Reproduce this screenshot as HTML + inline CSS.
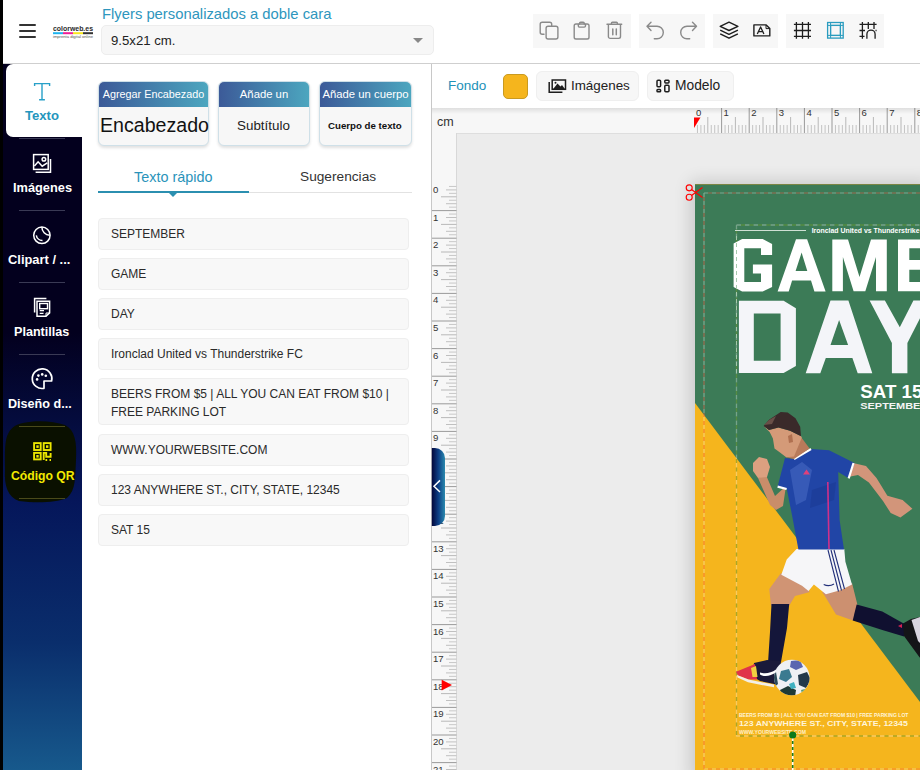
<!DOCTYPE html>
<html><head><meta charset="utf-8">
<style>
*{margin:0;padding:0;box-sizing:border-box}
html,body{width:920px;height:770px;overflow:hidden;background:#fff;font-family:"Liberation Sans",sans-serif}
.a{position:absolute}
#blk{left:0;top:0;width:3px;height:770px;background:#000}
#hdr{left:3px;top:0;width:917px;height:64px;background:#fff;border-bottom:1px solid #cfcfcf}
.ham{left:19px;width:17px;height:2px;background:#333;border-radius:1px}
#title{left:102px;top:6px;font-size:14.8px;color:#2e96bd;white-space:nowrap}
#dd{left:101px;top:25px;width:333px;height:30px;background:#f7f7f7;border:1px solid #ededed;border-radius:5px}
#ddt{left:111px;top:33px;font-size:13.2px;color:#222}
.tb{top:14px;height:34px;background:#f7f7f7}
#side{left:3px;top:64px;width:79px;height:706px;background:linear-gradient(180deg,#03001e 0%,#03001e 38%,#05165a 62%,#0a2e6c 82%,#17598c 100%)}
#tcard{left:6px;top:64px;width:80px;height:73px;background:#fff;border-radius:7px 0 0 7px}
.sl{color:#fff;font-weight:bold;font-size:12.6px;white-space:nowrap;text-align:center;width:79px;left:3px}
.sep{left:19px;width:46px;height:1px;background:#3a3a55}
#panel{left:82px;top:64px;width:349px;height:706px;background:#fff}
#vdiv{left:431px;top:64px;width:1px;height:706px;background:#c8c8c8}
.card{width:92px;height:65px;border:1px solid #cfe0e8;border-radius:6px;background:#f7f7f7;overflow:hidden;box-shadow:0 2px 3px rgba(0,0,0,.12)}
.ch{height:25px;background:linear-gradient(90deg,#3c5a98,#4ca6bf);color:#fff;font-size:11.3px;text-align:center;line-height:25px;white-space:nowrap}
.item{left:98px;width:311px;height:32px;background:#f8f8f8;border:1px solid #eeeeee;border-radius:4px;font-size:12px;color:#2a2a2a;padding:0 0 0 12px;line-height:30px;white-space:nowrap}
</style></head><body>
<div class="a" id="hdr"></div>
<div class="a" id="blk"></div>
<div class="a ham" style="top:24px"></div>
<div class="a ham" style="top:30px"></div>
<div class="a ham" style="top:36px"></div>

<svg class="a" style="left:50px;top:22px" width="48" height="20" viewBox="50 22 48 20">
<text x="53" y="31.3" font-size="6.3" font-weight="bold" fill="#2a2a2a" font-family="Liberation Sans" textLength="40" lengthAdjust="spacingAndGlyphs">colorweb.es</text>
<rect x="53" y="32.2" width="10" height="2" fill="#1eb4ee"/>
<rect x="63" y="32.2" width="10" height="2" fill="#ee1e96"/>
<rect x="73" y="32.2" width="10" height="2" fill="#f8e81e"/>
<rect x="83" y="32.2" width="10" height="2" fill="#333"/>
<text x="53" y="37.6" font-size="3" fill="#555" font-family="Liberation Sans" textLength="40" lengthAdjust="spacingAndGlyphs">imprenta digital online</text>
</svg>
<div class="a" id="title">Flyers personalizados a doble cara</div>
<div class="a" id="dd"></div>
<div class="a" id="ddt">9.5x21 cm.</div>
<svg class="a" style="left:413px;top:38px" width="11" height="6"><path d="M0 0H10L5 5Z" fill="#888"/></svg>

<div class="a tb" style="left:533px;width:98px"></div>
<div class="a tb" style="left:639px;width:66px"></div>
<div class="a tb" style="left:713px;width:65px"></div>
<div class="a tb" style="left:786px;width:98px"></div>


<svg class="a" style="left:520px;top:10px" width="380" height="40" viewBox="520 10 380 40">
<g fill="none" stroke="#8a8a8a" stroke-width="1.4" stroke-linecap="round" stroke-linejoin="round">
<path d="M544 34.3H542.2A2 2 0 0 1 540.2 32.3V24.2A2 2 0 0 1 542.2 22.2H549.7A2 2 0 0 1 551.7 24.2V25.5"/>
<rect x="546.1" y="26.3" width="11.8" height="12.7" rx="2"/>
<rect x="574.2" y="24" width="14.8" height="15" rx="1.8"/>
<path d="M578.3 24.5V25.8A1.3 1.3 0 0 0 579.6 27.1H584.2A1.3 1.3 0 0 0 585.5 25.8V24.5"/>
<path d="M579.5 24V23.4A1.2 1.2 0 0 1 580.7 22.2H583.1A1.2 1.2 0 0 1 584.3 23.4V24"/>
<path d="M607 24.3H621.7M611.4 24.3V23.3A1 1 0 0 1 612.4 22.3H616.4A1 1 0 0 1 617.4 23.3V24.3"/>
<path d="M608.4 24.8V36.6A1.8 1.8 0 0 0 610.2 38.4H618.7A1.8 1.8 0 0 0 620.5 36.6V24.8"/>
<path d="M612.8 28.9V34.8M616.3 28.9V34.8" stroke-width="1.5"/>
<path d="M651 22.3L647 26.2L651 30.5M647.3 26.2H657A6.3 6.3 0 0 1 657 38.8H654.3"/>
<path d="M692.5 22.3L696.5 26.2L692.5 30.5M696.2 26.2H687A6.3 6.3 0 0 0 687 38.8H689.7"/>
</g>
<g fill="none" stroke="#1e1e1e" stroke-width="1.4" stroke-linejoin="round">
<path d="M729 22.2L737.9 26.4L729 30.5L720.2 26.4Z"/>
<path d="M720.2 30.1L729 34.3L737.9 30.1"/>
<path d="M720.2 33.8L729 38.2L737.9 33.8"/>
<path d="M753.9 24.9H766.2L769.8 28.5V35.9H753.9Z"/>
<path d="M766 25V28.6H769.6" stroke-width="1"/>
<path d="M757.3 34L760.6 26.9L763.9 34M758.5 31.6H762.7" stroke-width="1.3"/>
</g>
<g fill="none" stroke="#1e1e1e" stroke-width="1.3">
<path d="M796.4 21.9V38.7M802.5 21.9V38.7M808.4 21.9V38.7M793.9 24.4H811M793.9 30.5H811M793.9 36.4H811"/>
<path d="M862.4 21.9V38.7M868.3 21.9V29M874 21.9V29M859.5 24.4H876.6M859.5 30.5H865M859.5 36.4H864.5M866.9 38.7V34.2A4.1 4.1 0 0 1 875.1 34.2V38.7M875.5 30.5H876.6"/>
</g>
<g fill="none" stroke="#2a9cbf" stroke-width="1.3">
<rect x="827.6" y="22.5" width="15.6" height="15.6"/>
<rect x="830.6" y="25.4" width="9.8" height="10"/>
<path d="M830.6 22.5V38.1M840.4 22.5V38.1M827.6 25.4H843.2M827.6 35.4H843.2" stroke-width="1"/>
</g>
</svg>
<div class="a" id="side"></div>
<div class="a" id="panel"></div>
<div class="a" id="tcard"></div>
<div class="a" style="left:432px;top:64px;width:488px;height:706px;background:#ececec"></div>
<svg class="a" style="left:432px;top:64px" width="488" height="706" viewBox="432 64 488 706">
<defs><filter id="sh" x="-30%" y="-30%" width="160%" height="160%"><feGaussianBlur stdDeviation="9"/></filter><linearGradient id="tbs" x1="0" y1="0" x2="0" y2="1"><stop offset="0" stop-color="#000" stop-opacity=".10"/><stop offset="1" stop-color="#000" stop-opacity="0"/></linearGradient></defs>
<rect x="691" y="182" width="240" height="600" fill="#000" opacity=".16" filter="url(#sh)"/>
<rect x="432" y="108" width="488" height="25.5" fill="#f7f7f7"/>
<rect x="432" y="133" width="488" height="1" fill="#dedede"/>
<rect x="432" y="133" width="24.5" height="637" fill="#f7f7f7"/>
<rect x="456" y="133" width="1" height="637" fill="#d8d8d8"/>
<rect x="696.95" y="125" width="1" height="8" fill="#c4c4c4"/>
<rect x="700.40" y="125" width="1" height="8" fill="#c4c4c4"/>
<rect x="703.85" y="125" width="1" height="8" fill="#c4c4c4"/>
<rect x="707.30" y="117" width="1" height="16" fill="#b8b8b8"/>
<rect x="710.75" y="125" width="1" height="8" fill="#c4c4c4"/>
<rect x="714.20" y="125" width="1" height="8" fill="#c4c4c4"/>
<rect x="717.65" y="125" width="1" height="8" fill="#c4c4c4"/>
<rect x="721.10" y="108" width="1" height="25" fill="#9a9a9a"/>
<rect x="724.55" y="125" width="1" height="8" fill="#c4c4c4"/>
<rect x="728.00" y="125" width="1" height="8" fill="#c4c4c4"/>
<rect x="731.45" y="125" width="1" height="8" fill="#c4c4c4"/>
<rect x="734.90" y="117" width="1" height="16" fill="#b8b8b8"/>
<rect x="738.35" y="125" width="1" height="8" fill="#c4c4c4"/>
<rect x="741.80" y="125" width="1" height="8" fill="#c4c4c4"/>
<rect x="745.25" y="125" width="1" height="8" fill="#c4c4c4"/>
<rect x="748.70" y="108" width="1" height="25" fill="#9a9a9a"/>
<rect x="752.15" y="125" width="1" height="8" fill="#c4c4c4"/>
<rect x="755.60" y="125" width="1" height="8" fill="#c4c4c4"/>
<rect x="759.05" y="125" width="1" height="8" fill="#c4c4c4"/>
<rect x="762.50" y="117" width="1" height="16" fill="#b8b8b8"/>
<rect x="765.95" y="125" width="1" height="8" fill="#c4c4c4"/>
<rect x="769.40" y="125" width="1" height="8" fill="#c4c4c4"/>
<rect x="772.85" y="125" width="1" height="8" fill="#c4c4c4"/>
<rect x="776.30" y="108" width="1" height="25" fill="#9a9a9a"/>
<rect x="779.75" y="125" width="1" height="8" fill="#c4c4c4"/>
<rect x="783.20" y="125" width="1" height="8" fill="#c4c4c4"/>
<rect x="786.65" y="125" width="1" height="8" fill="#c4c4c4"/>
<rect x="790.10" y="117" width="1" height="16" fill="#b8b8b8"/>
<rect x="793.55" y="125" width="1" height="8" fill="#c4c4c4"/>
<rect x="797.00" y="125" width="1" height="8" fill="#c4c4c4"/>
<rect x="800.45" y="125" width="1" height="8" fill="#c4c4c4"/>
<rect x="803.90" y="108" width="1" height="25" fill="#9a9a9a"/>
<rect x="807.35" y="125" width="1" height="8" fill="#c4c4c4"/>
<rect x="810.80" y="125" width="1" height="8" fill="#c4c4c4"/>
<rect x="814.25" y="125" width="1" height="8" fill="#c4c4c4"/>
<rect x="817.70" y="117" width="1" height="16" fill="#b8b8b8"/>
<rect x="821.15" y="125" width="1" height="8" fill="#c4c4c4"/>
<rect x="824.60" y="125" width="1" height="8" fill="#c4c4c4"/>
<rect x="828.05" y="125" width="1" height="8" fill="#c4c4c4"/>
<rect x="831.50" y="108" width="1" height="25" fill="#9a9a9a"/>
<rect x="834.95" y="125" width="1" height="8" fill="#c4c4c4"/>
<rect x="838.40" y="125" width="1" height="8" fill="#c4c4c4"/>
<rect x="841.85" y="125" width="1" height="8" fill="#c4c4c4"/>
<rect x="845.30" y="117" width="1" height="16" fill="#b8b8b8"/>
<rect x="848.75" y="125" width="1" height="8" fill="#c4c4c4"/>
<rect x="852.20" y="125" width="1" height="8" fill="#c4c4c4"/>
<rect x="855.65" y="125" width="1" height="8" fill="#c4c4c4"/>
<rect x="859.10" y="108" width="1" height="25" fill="#9a9a9a"/>
<rect x="862.55" y="125" width="1" height="8" fill="#c4c4c4"/>
<rect x="866.00" y="125" width="1" height="8" fill="#c4c4c4"/>
<rect x="869.45" y="125" width="1" height="8" fill="#c4c4c4"/>
<rect x="872.90" y="117" width="1" height="16" fill="#b8b8b8"/>
<rect x="876.35" y="125" width="1" height="8" fill="#c4c4c4"/>
<rect x="879.80" y="125" width="1" height="8" fill="#c4c4c4"/>
<rect x="883.25" y="125" width="1" height="8" fill="#c4c4c4"/>
<rect x="886.70" y="108" width="1" height="25" fill="#9a9a9a"/>
<rect x="890.15" y="125" width="1" height="8" fill="#c4c4c4"/>
<rect x="893.60" y="125" width="1" height="8" fill="#c4c4c4"/>
<rect x="897.05" y="125" width="1" height="8" fill="#c4c4c4"/>
<rect x="900.50" y="117" width="1" height="16" fill="#b8b8b8"/>
<rect x="903.95" y="125" width="1" height="8" fill="#c4c4c4"/>
<rect x="907.40" y="125" width="1" height="8" fill="#c4c4c4"/>
<rect x="910.85" y="125" width="1" height="8" fill="#c4c4c4"/>
<rect x="914.30" y="108" width="1" height="25" fill="#9a9a9a"/>
<rect x="917.75" y="125" width="1" height="8" fill="#c4c4c4"/>
<text x="696.0" y="116" font-size="9.5" fill="#333" font-family="Liberation Sans">0</text>
<text x="723.6" y="116" font-size="9.5" fill="#333" font-family="Liberation Sans">1</text>
<text x="751.2" y="116" font-size="9.5" fill="#333" font-family="Liberation Sans">2</text>
<text x="778.8" y="116" font-size="9.5" fill="#333" font-family="Liberation Sans">3</text>
<text x="806.4" y="116" font-size="9.5" fill="#333" font-family="Liberation Sans">4</text>
<text x="834.0" y="116" font-size="9.5" fill="#333" font-family="Liberation Sans">5</text>
<text x="861.6" y="116" font-size="9.5" fill="#333" font-family="Liberation Sans">6</text>
<text x="889.2" y="116" font-size="9.5" fill="#333" font-family="Liberation Sans">7</text>
<text x="916.8" y="116" font-size="9.5" fill="#333" font-family="Liberation Sans">8</text>
<rect x="449" y="185.95" width="7.5" height="1" fill="#c8c8c8"/>
<rect x="446" y="189.40" width="10.5" height="1" fill="#c0c0c0"/>
<rect x="449" y="192.85" width="7.5" height="1" fill="#c8c8c8"/>
<rect x="441" y="196.30" width="15.5" height="1" fill="#b8b8b8"/>
<rect x="449" y="199.75" width="7.5" height="1" fill="#c8c8c8"/>
<rect x="446" y="203.20" width="10.5" height="1" fill="#c0c0c0"/>
<rect x="449" y="206.65" width="7.5" height="1" fill="#c8c8c8"/>
<rect x="432" y="210.10" width="24.5" height="1" fill="#9a9a9a"/>
<rect x="449" y="213.55" width="7.5" height="1" fill="#c8c8c8"/>
<rect x="446" y="217.00" width="10.5" height="1" fill="#c0c0c0"/>
<rect x="449" y="220.45" width="7.5" height="1" fill="#c8c8c8"/>
<rect x="441" y="223.90" width="15.5" height="1" fill="#b8b8b8"/>
<rect x="449" y="227.35" width="7.5" height="1" fill="#c8c8c8"/>
<rect x="446" y="230.80" width="10.5" height="1" fill="#c0c0c0"/>
<rect x="449" y="234.25" width="7.5" height="1" fill="#c8c8c8"/>
<rect x="432" y="237.70" width="24.5" height="1" fill="#9a9a9a"/>
<rect x="449" y="241.15" width="7.5" height="1" fill="#c8c8c8"/>
<rect x="446" y="244.60" width="10.5" height="1" fill="#c0c0c0"/>
<rect x="449" y="248.05" width="7.5" height="1" fill="#c8c8c8"/>
<rect x="441" y="251.50" width="15.5" height="1" fill="#b8b8b8"/>
<rect x="449" y="254.95" width="7.5" height="1" fill="#c8c8c8"/>
<rect x="446" y="258.40" width="10.5" height="1" fill="#c0c0c0"/>
<rect x="449" y="261.85" width="7.5" height="1" fill="#c8c8c8"/>
<rect x="432" y="265.30" width="24.5" height="1" fill="#9a9a9a"/>
<rect x="449" y="268.75" width="7.5" height="1" fill="#c8c8c8"/>
<rect x="446" y="272.20" width="10.5" height="1" fill="#c0c0c0"/>
<rect x="449" y="275.65" width="7.5" height="1" fill="#c8c8c8"/>
<rect x="441" y="279.10" width="15.5" height="1" fill="#b8b8b8"/>
<rect x="449" y="282.55" width="7.5" height="1" fill="#c8c8c8"/>
<rect x="446" y="286.00" width="10.5" height="1" fill="#c0c0c0"/>
<rect x="449" y="289.45" width="7.5" height="1" fill="#c8c8c8"/>
<rect x="432" y="292.90" width="24.5" height="1" fill="#9a9a9a"/>
<rect x="449" y="296.35" width="7.5" height="1" fill="#c8c8c8"/>
<rect x="446" y="299.80" width="10.5" height="1" fill="#c0c0c0"/>
<rect x="449" y="303.25" width="7.5" height="1" fill="#c8c8c8"/>
<rect x="441" y="306.70" width="15.5" height="1" fill="#b8b8b8"/>
<rect x="449" y="310.15" width="7.5" height="1" fill="#c8c8c8"/>
<rect x="446" y="313.60" width="10.5" height="1" fill="#c0c0c0"/>
<rect x="449" y="317.05" width="7.5" height="1" fill="#c8c8c8"/>
<rect x="432" y="320.50" width="24.5" height="1" fill="#9a9a9a"/>
<rect x="449" y="323.95" width="7.5" height="1" fill="#c8c8c8"/>
<rect x="446" y="327.40" width="10.5" height="1" fill="#c0c0c0"/>
<rect x="449" y="330.85" width="7.5" height="1" fill="#c8c8c8"/>
<rect x="441" y="334.30" width="15.5" height="1" fill="#b8b8b8"/>
<rect x="449" y="337.75" width="7.5" height="1" fill="#c8c8c8"/>
<rect x="446" y="341.20" width="10.5" height="1" fill="#c0c0c0"/>
<rect x="449" y="344.65" width="7.5" height="1" fill="#c8c8c8"/>
<rect x="432" y="348.10" width="24.5" height="1" fill="#9a9a9a"/>
<rect x="449" y="351.55" width="7.5" height="1" fill="#c8c8c8"/>
<rect x="446" y="355.00" width="10.5" height="1" fill="#c0c0c0"/>
<rect x="449" y="358.45" width="7.5" height="1" fill="#c8c8c8"/>
<rect x="441" y="361.90" width="15.5" height="1" fill="#b8b8b8"/>
<rect x="449" y="365.35" width="7.5" height="1" fill="#c8c8c8"/>
<rect x="446" y="368.80" width="10.5" height="1" fill="#c0c0c0"/>
<rect x="449" y="372.25" width="7.5" height="1" fill="#c8c8c8"/>
<rect x="432" y="375.70" width="24.5" height="1" fill="#9a9a9a"/>
<rect x="449" y="379.15" width="7.5" height="1" fill="#c8c8c8"/>
<rect x="446" y="382.60" width="10.5" height="1" fill="#c0c0c0"/>
<rect x="449" y="386.05" width="7.5" height="1" fill="#c8c8c8"/>
<rect x="441" y="389.50" width="15.5" height="1" fill="#b8b8b8"/>
<rect x="449" y="392.95" width="7.5" height="1" fill="#c8c8c8"/>
<rect x="446" y="396.40" width="10.5" height="1" fill="#c0c0c0"/>
<rect x="449" y="399.85" width="7.5" height="1" fill="#c8c8c8"/>
<rect x="432" y="403.30" width="24.5" height="1" fill="#9a9a9a"/>
<rect x="449" y="406.75" width="7.5" height="1" fill="#c8c8c8"/>
<rect x="446" y="410.20" width="10.5" height="1" fill="#c0c0c0"/>
<rect x="449" y="413.65" width="7.5" height="1" fill="#c8c8c8"/>
<rect x="441" y="417.10" width="15.5" height="1" fill="#b8b8b8"/>
<rect x="449" y="420.55" width="7.5" height="1" fill="#c8c8c8"/>
<rect x="446" y="424.00" width="10.5" height="1" fill="#c0c0c0"/>
<rect x="449" y="427.45" width="7.5" height="1" fill="#c8c8c8"/>
<rect x="432" y="430.90" width="24.5" height="1" fill="#9a9a9a"/>
<rect x="449" y="434.35" width="7.5" height="1" fill="#c8c8c8"/>
<rect x="446" y="437.80" width="10.5" height="1" fill="#c0c0c0"/>
<rect x="449" y="441.25" width="7.5" height="1" fill="#c8c8c8"/>
<rect x="441" y="444.70" width="15.5" height="1" fill="#b8b8b8"/>
<rect x="449" y="448.15" width="7.5" height="1" fill="#c8c8c8"/>
<rect x="446" y="451.60" width="10.5" height="1" fill="#c0c0c0"/>
<rect x="449" y="455.05" width="7.5" height="1" fill="#c8c8c8"/>
<rect x="432" y="458.50" width="24.5" height="1" fill="#9a9a9a"/>
<rect x="449" y="461.95" width="7.5" height="1" fill="#c8c8c8"/>
<rect x="446" y="465.40" width="10.5" height="1" fill="#c0c0c0"/>
<rect x="449" y="468.85" width="7.5" height="1" fill="#c8c8c8"/>
<rect x="441" y="472.30" width="15.5" height="1" fill="#b8b8b8"/>
<rect x="449" y="475.75" width="7.5" height="1" fill="#c8c8c8"/>
<rect x="446" y="479.20" width="10.5" height="1" fill="#c0c0c0"/>
<rect x="449" y="482.65" width="7.5" height="1" fill="#c8c8c8"/>
<rect x="432" y="486.10" width="24.5" height="1" fill="#9a9a9a"/>
<rect x="449" y="489.55" width="7.5" height="1" fill="#c8c8c8"/>
<rect x="446" y="493.00" width="10.5" height="1" fill="#c0c0c0"/>
<rect x="449" y="496.45" width="7.5" height="1" fill="#c8c8c8"/>
<rect x="441" y="499.90" width="15.5" height="1" fill="#b8b8b8"/>
<rect x="449" y="503.35" width="7.5" height="1" fill="#c8c8c8"/>
<rect x="446" y="506.80" width="10.5" height="1" fill="#c0c0c0"/>
<rect x="449" y="510.25" width="7.5" height="1" fill="#c8c8c8"/>
<rect x="432" y="513.70" width="24.5" height="1" fill="#9a9a9a"/>
<rect x="449" y="517.15" width="7.5" height="1" fill="#c8c8c8"/>
<rect x="446" y="520.60" width="10.5" height="1" fill="#c0c0c0"/>
<rect x="449" y="524.05" width="7.5" height="1" fill="#c8c8c8"/>
<rect x="441" y="527.50" width="15.5" height="1" fill="#b8b8b8"/>
<rect x="449" y="530.95" width="7.5" height="1" fill="#c8c8c8"/>
<rect x="446" y="534.40" width="10.5" height="1" fill="#c0c0c0"/>
<rect x="449" y="537.85" width="7.5" height="1" fill="#c8c8c8"/>
<rect x="432" y="541.30" width="24.5" height="1" fill="#9a9a9a"/>
<rect x="449" y="544.75" width="7.5" height="1" fill="#c8c8c8"/>
<rect x="446" y="548.20" width="10.5" height="1" fill="#c0c0c0"/>
<rect x="449" y="551.65" width="7.5" height="1" fill="#c8c8c8"/>
<rect x="441" y="555.10" width="15.5" height="1" fill="#b8b8b8"/>
<rect x="449" y="558.55" width="7.5" height="1" fill="#c8c8c8"/>
<rect x="446" y="562.00" width="10.5" height="1" fill="#c0c0c0"/>
<rect x="449" y="565.45" width="7.5" height="1" fill="#c8c8c8"/>
<rect x="432" y="568.90" width="24.5" height="1" fill="#9a9a9a"/>
<rect x="449" y="572.35" width="7.5" height="1" fill="#c8c8c8"/>
<rect x="446" y="575.80" width="10.5" height="1" fill="#c0c0c0"/>
<rect x="449" y="579.25" width="7.5" height="1" fill="#c8c8c8"/>
<rect x="441" y="582.70" width="15.5" height="1" fill="#b8b8b8"/>
<rect x="449" y="586.15" width="7.5" height="1" fill="#c8c8c8"/>
<rect x="446" y="589.60" width="10.5" height="1" fill="#c0c0c0"/>
<rect x="449" y="593.05" width="7.5" height="1" fill="#c8c8c8"/>
<rect x="432" y="596.50" width="24.5" height="1" fill="#9a9a9a"/>
<rect x="449" y="599.95" width="7.5" height="1" fill="#c8c8c8"/>
<rect x="446" y="603.40" width="10.5" height="1" fill="#c0c0c0"/>
<rect x="449" y="606.85" width="7.5" height="1" fill="#c8c8c8"/>
<rect x="441" y="610.30" width="15.5" height="1" fill="#b8b8b8"/>
<rect x="449" y="613.75" width="7.5" height="1" fill="#c8c8c8"/>
<rect x="446" y="617.20" width="10.5" height="1" fill="#c0c0c0"/>
<rect x="449" y="620.65" width="7.5" height="1" fill="#c8c8c8"/>
<rect x="432" y="624.10" width="24.5" height="1" fill="#9a9a9a"/>
<rect x="449" y="627.55" width="7.5" height="1" fill="#c8c8c8"/>
<rect x="446" y="631.00" width="10.5" height="1" fill="#c0c0c0"/>
<rect x="449" y="634.45" width="7.5" height="1" fill="#c8c8c8"/>
<rect x="441" y="637.90" width="15.5" height="1" fill="#b8b8b8"/>
<rect x="449" y="641.35" width="7.5" height="1" fill="#c8c8c8"/>
<rect x="446" y="644.80" width="10.5" height="1" fill="#c0c0c0"/>
<rect x="449" y="648.25" width="7.5" height="1" fill="#c8c8c8"/>
<rect x="432" y="651.70" width="24.5" height="1" fill="#9a9a9a"/>
<rect x="449" y="655.15" width="7.5" height="1" fill="#c8c8c8"/>
<rect x="446" y="658.60" width="10.5" height="1" fill="#c0c0c0"/>
<rect x="449" y="662.05" width="7.5" height="1" fill="#c8c8c8"/>
<rect x="441" y="665.50" width="15.5" height="1" fill="#b8b8b8"/>
<rect x="449" y="668.95" width="7.5" height="1" fill="#c8c8c8"/>
<rect x="446" y="672.40" width="10.5" height="1" fill="#c0c0c0"/>
<rect x="449" y="675.85" width="7.5" height="1" fill="#c8c8c8"/>
<rect x="432" y="679.30" width="24.5" height="1" fill="#9a9a9a"/>
<rect x="449" y="682.75" width="7.5" height="1" fill="#c8c8c8"/>
<rect x="446" y="686.20" width="10.5" height="1" fill="#c0c0c0"/>
<rect x="449" y="689.65" width="7.5" height="1" fill="#c8c8c8"/>
<rect x="441" y="693.10" width="15.5" height="1" fill="#b8b8b8"/>
<rect x="449" y="696.55" width="7.5" height="1" fill="#c8c8c8"/>
<rect x="446" y="700.00" width="10.5" height="1" fill="#c0c0c0"/>
<rect x="449" y="703.45" width="7.5" height="1" fill="#c8c8c8"/>
<rect x="432" y="706.90" width="24.5" height="1" fill="#9a9a9a"/>
<rect x="449" y="710.35" width="7.5" height="1" fill="#c8c8c8"/>
<rect x="446" y="713.80" width="10.5" height="1" fill="#c0c0c0"/>
<rect x="449" y="717.25" width="7.5" height="1" fill="#c8c8c8"/>
<rect x="441" y="720.70" width="15.5" height="1" fill="#b8b8b8"/>
<rect x="449" y="724.15" width="7.5" height="1" fill="#c8c8c8"/>
<rect x="446" y="727.60" width="10.5" height="1" fill="#c0c0c0"/>
<rect x="449" y="731.05" width="7.5" height="1" fill="#c8c8c8"/>
<rect x="432" y="734.50" width="24.5" height="1" fill="#9a9a9a"/>
<rect x="449" y="737.95" width="7.5" height="1" fill="#c8c8c8"/>
<rect x="446" y="741.40" width="10.5" height="1" fill="#c0c0c0"/>
<rect x="449" y="744.85" width="7.5" height="1" fill="#c8c8c8"/>
<rect x="441" y="748.30" width="15.5" height="1" fill="#b8b8b8"/>
<rect x="449" y="751.75" width="7.5" height="1" fill="#c8c8c8"/>
<rect x="446" y="755.20" width="10.5" height="1" fill="#c0c0c0"/>
<rect x="449" y="758.65" width="7.5" height="1" fill="#c8c8c8"/>
<rect x="432" y="762.10" width="24.5" height="1" fill="#9a9a9a"/>
<rect x="449" y="765.55" width="7.5" height="1" fill="#c8c8c8"/>
<rect x="446" y="769.00" width="10.5" height="1" fill="#c0c0c0"/>
<text x="433" y="193.0" font-size="9.6" fill="#333" font-family="Liberation Sans">0</text>
<text x="433" y="220.6" font-size="9.6" fill="#333" font-family="Liberation Sans">1</text>
<text x="433" y="248.2" font-size="9.6" fill="#333" font-family="Liberation Sans">2</text>
<text x="433" y="275.8" font-size="9.6" fill="#333" font-family="Liberation Sans">3</text>
<text x="433" y="303.4" font-size="9.6" fill="#333" font-family="Liberation Sans">4</text>
<text x="433" y="331.0" font-size="9.6" fill="#333" font-family="Liberation Sans">5</text>
<text x="433" y="358.6" font-size="9.6" fill="#333" font-family="Liberation Sans">6</text>
<text x="433" y="386.2" font-size="9.6" fill="#333" font-family="Liberation Sans">7</text>
<text x="433" y="413.8" font-size="9.6" fill="#333" font-family="Liberation Sans">8</text>
<text x="433" y="441.4" font-size="9.6" fill="#333" font-family="Liberation Sans">9</text>
<text x="433" y="469.0" font-size="9.6" fill="#333" font-family="Liberation Sans">10</text>
<text x="433" y="496.6" font-size="9.6" fill="#333" font-family="Liberation Sans">11</text>
<text x="433" y="524.2" font-size="9.6" fill="#333" font-family="Liberation Sans">12</text>
<text x="433" y="551.8" font-size="9.6" fill="#333" font-family="Liberation Sans">13</text>
<text x="433" y="579.4" font-size="9.6" fill="#333" font-family="Liberation Sans">14</text>
<text x="433" y="607.0" font-size="9.6" fill="#333" font-family="Liberation Sans">15</text>
<text x="433" y="634.6" font-size="9.6" fill="#333" font-family="Liberation Sans">16</text>
<text x="433" y="662.2" font-size="9.6" fill="#333" font-family="Liberation Sans">17</text>
<text x="433" y="689.8" font-size="9.6" fill="#333" font-family="Liberation Sans">18</text>
<text x="433" y="717.4" font-size="9.6" fill="#333" font-family="Liberation Sans">19</text>
<text x="433" y="745.0" font-size="9.6" fill="#333" font-family="Liberation Sans">20</text>
<text x="433" y="772.6" font-size="9.6" fill="#333" font-family="Liberation Sans">21</text>
<path d="M694 117.5H700.5L694 128Z" fill="#f00"/>
<path d="M441.7 679.7L452 685L441.7 690.6Z" fill="#f00"/>
<rect x="432" y="108" width="488" height="6" fill="url(#tbs)"/>
</svg>
<svg class="a" style="left:432px;top:64px" width="488" height="706" viewBox="432 64 488 706">
<defs><clipPath id="pc"><rect x="695" y="184" width="240" height="600"/></clipPath></defs>
<g clip-path="url(#pc)">
<rect x="695" y="184" width="240" height="600" fill="#3c7b57"/>
<rect x="695" y="184" width="240" height=".8" fill="#8a8a40"/>
<path d="M695 403L920 702V780H695Z" fill="#f5b51d"/>
<!-- outer margin dashes -->
<path d="M704 193V769M704 193H930M704 769H930" stroke="#ffffff" stroke-opacity=".35" stroke-width="1.2" fill="none" stroke-dasharray="4 4"/>
<path d="M704 193V769M704 193H930M704 769H930" stroke="#ff5a4a" stroke-opacity=".5" stroke-width="1.2" fill="none" stroke-dasharray="4 4" stroke-dashoffset="4"/>
<!-- inner text box dashes -->
<path d="M736.5 225V736H930M736.5 225H930" stroke="#ffffff" stroke-opacity=".3" stroke-width="1.3" fill="none" stroke-dasharray="4.5 4"/>
<path d="M736.5 225V736H930M736.5 225H930" stroke="#6a9a30" stroke-opacity=".55" stroke-width="1.3" fill="none" stroke-dasharray="4 4.5" stroke-dashoffset="4"/>
<!-- top small line & text -->
<rect x="735" y="230" width="71" height="1" fill="#cfe0d4"/>
<text x="811.7" y="233" font-size="6.6" font-weight="bold" fill="#fff" font-family="Liberation Sans" textLength="119" lengthAdjust="spacingAndGlyphs">Ironclad United vs Thunderstrike FC</text>
<!-- GAME -->
<g fill="#fff">
<path d="M742.1,238.9 L762.7,238.9 L772.1,244 L772.1,255.1 L761,255.1 L761,248.3 L744.3,248.3 L744.3,282.1 L761,282.1 L761,273.6 L752.9,273.6 L752.9,264.4 L772.1,264.4 L772.1,286.9 L762.7,291.6 L742.1,291.6 L733.6,286.9 L733.6,243.6 Z"/>
<path fill-rule="evenodd" d="M777.6,291.6 L796,239.3 L807.1,239.3 L825.6,291.6 L814.4,291.6 L811,280.4 L792.1,280.4 L788.7,291.6 Z M801.6,252.6 L807.3,271 L795.6,271 Z"/>
<path d="M832.3,291.3 L832.3,239.4 L848,239.4 L859.5,277 L871,239.4 L886.8,239.4 L886.8,291.3 L876,291.3 L876,257 L865.3,291.3 L853.6,291.3 L842.9,257 L842.9,291.3 Z"/>
<path d="M898,239.4 H930 V248.3 H909.3 V260 H930 V269.8 H909.3 V282 H930 V291.3 H898 Z"/>
</g>
<!-- DAY -->
<g fill="#f4f5f9">
<path fill-rule="evenodd" d="M738.9,300.7 H783.6 L795.9,308.3 V366 L783.6,373.1 H738.9 Z M753.8,313.6 V360.7 H780.6 V313.6 Z"/>
<path fill-rule="evenodd" d="M805.7,373.3 L830.5,300.6 L848.4,300.6 L872.3,373.3 L857.7,373.3 L852.4,357.9 L825.8,357.9 L820.3,373.3 Z M839.1,319.9 L848.1,345 L830.5,345 Z"/>
<path d="M869.6,300.6 H884.9 L899.8,327.2 L913.4,300.6 H929 L907.4,343 V373.3 H891.9 V343 Z"/>
</g>
<!-- dashed left line over letters -->
<path d="M736.5 236V375" stroke="#a6c9ad" stroke-width="1" fill="none" stroke-dasharray="4 3"/>
<text x="860.3" y="397.8" font-size="17.8" font-weight="bold" fill="#fff" font-family="Liberation Sans" textLength="62" lengthAdjust="spacingAndGlyphs">SAT 15</text>
<text x="860.3" y="408.5" font-size="9" font-weight="bold" fill="#f4f4f4" font-family="Liberation Sans" textLength="68" lengthAdjust="spacingAndGlyphs">SEPTEMBER</text>
<!-- player -->
<g id="player">
<!-- right leg thigh + calf skin -->
<path d="M822 592 L852 583 L855 595 L857.5 605 L853 620.5 L836 614.5 L824.7 595.8 Z" fill="#cc9070"/>
<!-- right sock -->
<path d="M856.6 604.4 L882.3 611.4 L904.5 624 L904 636.5 L882.3 630 L852.7 620.5 Z" fill="#101030"/>
<!-- right shoe -->
<path d="M903 623.6 L911 619 L920 617 L925 617 L925 661 L919.7 657.4 L908 641.4 L904 636 Z" fill="#141418"/>
<path d="M911.5 620 L920 617 L925 618 L925 648 L918 641 L914 628 Z" fill="#d8d4e0"/><path d="M898 626 L902 624 L902 628 Z" fill="#d02050"/>
<!-- left leg thigh/knee/shin skin -->
<path d="M781 573 L800 582 L810 592 L795 596 L789 606 L771 606 L769.3 589 Z" fill="#d09474"/>
<!-- left sock -->
<path d="M771.5 604 L789.2 604 L787 628 L781 662 L768 663 L770 632 Z" fill="#14163a"/>
<!-- left shoe -->
<path d="M754 663 L767 660 L781 661 L779 685 L760 681 L752 676 Z" fill="#1a1a3a"/>
<path d="M736 671.7 L755 664 L757 679.5 L748.5 679.6 L738 675.5 Z" fill="#e0344a"/>
<path d="M751 668 L756 666 L757.5 677 L752.5 677 Z" fill="#f0d040"/>
<path d="M760 672.5 Q768 675 776 669.5 L776.5 672 Q767 678.5 760 674.5 Z" fill="#fff"/>
<path d="M737 675 L748.5 679.6 L774 684.6 L774 687.3 L748 682.3 L737.5 677.5 Z" fill="#f2efe6"/>
<!-- ball -->
<clipPath id="bc"><circle cx="791.8" cy="677.5" r="17.8"/></clipPath>
<circle cx="791.8" cy="677.5" r="17.8" fill="#eef0f4"/>
<g clip-path="url(#bc)">
<path d="M791 661 L800 660 L803 667 L796 670 L790 667 Z" fill="#5a66b0"/>
<path d="M781 671 L789 669 L792 677 L786 682 L779 679 Z" fill="#3a7a90"/>
<path d="M798 675 L807 672 L811 680 L806 688 L799 685 Z" fill="#22384a"/>
<path d="M780 690 L788 686 L796 690 L795 697 L782 697 Z" fill="#1e3a36"/>
<path d="M801 690 L809 688 L812 696 L803 697 Z" fill="#5a9a70"/>
<path d="M789 684 L794 682 L796 688 L791 689 Z" fill="#40b0c0"/>
<path d="M772 678 L776 672 L778 684 L773 688 Z" fill="#2a4a5a"/>
</g>
<!-- shorts -->
<path d="M796.5 549 L844.3 549 L845.4 561.7 L852 584.6 L841 590 L825.9 594.3 L813.9 584.6 L808.5 591 L802 585.7 L781.3 574.8 L786.7 559.6 Z" fill="#f6f6f8"/>
<path d="M828 550 L838.5 591.5 M831 550 L841.5 590.5 M834 550 L844.5 589" stroke="#22307a" stroke-width="1.1"/>
<path d="M823.7 584.5 Q829 587 834 584" stroke="#22307a" stroke-width="1.2" fill="none"/>
<!-- left arm -->
<path d="M786 486 L783 506 L776 510 L770 505 L758 478 L766 475 L775 496 Z" fill="#c98d6a"/>
<path d="M753 463 L759 457 L767 459 L770 467 L767 477 L758 478 L753 471 Z" fill="#dca080"/>
<!-- right arm -->
<path d="M853 463 L866 466 L876.5 478 L887.4 495.7 L902.6 500 L912.4 508.7 L900.4 517.4 L890.7 513 L883 501 L868.9 482.6 L858 475 L848 477 Z" fill="#d2957a"/>
<!-- jersey -->
<path d="M794 459 L811 449 L829 450.3 L854.5 463 L848.7 478.3 L838.2 472 L839.6 520 L844 549.6 L798.4 549.6 L792 515 L786.8 489 L777.4 487.6 L785 458 Z" fill="#2145a6"/>
<path d="M790 470 L802 462 L812 470 L806 500 L796 505 Z" fill="#4a6cc4" opacity=".55"/>
<path d="M812 490 L836 482 L834 500 L810 508 Z" fill="#1a3890" opacity=".5"/>
<path d="M827.8 482 L829 549" stroke="#d0308a" stroke-width="1.6"/>
<path d="M794 459 L811 449" stroke="#fff" stroke-width="2.2"/>
<path d="M848.7 478.3 L853.5 463" stroke="#fff" stroke-width="2.2"/>
<path d="M777.6 486.6 L786.6 489" stroke="#fff" stroke-width="2.2"/>
<path d="M806.5 469.5 L810 474.5 L803 474.5 Z" fill="#e0407a"/>
<!-- neck & head -->
<path d="M786 452 L801 437 L809.6 448.6 L794 459 L786.2 457.2 Z" fill="#b87a5a"/>
<path d="M763.6 426 L769.8 432.3 L772.9 438.5 L774.5 448.6 L780 452.5 L786.2 457.2 L794 456.4 L801.8 437.7 L801 436 L790 430.7 L778.4 427.6 L769 430 Z" fill="#d49a78"/>
<path d="M763.6 426 L769 419.8 L780.7 412 L787.7 412.4 L795.5 418.2 L800.2 426.8 L801 436.2 L790 430.7 L778.4 427.6 L769 430 Z" fill="#3a2a2a"/>
<path d="M764 425 L769 420 L776 416 L772 424 Z" fill="#6a5048"/>
<path d="M788 436 L792 434 L793 442 L789 443 Z" fill="#b07050"/>
</g>
<!-- bottom texts -->
<text x="738.9" y="717" font-size="5.6" font-weight="bold" fill="#fff4d8" font-family="Liberation Sans" textLength="169.5" lengthAdjust="spacingAndGlyphs">BEERS FROM $5 | ALL YOU CAN EAT FROM $10 | FREE PARKING LOT</text>
<text x="738.9" y="726" font-size="7.6" font-weight="bold" fill="#fff4d8" font-family="Liberation Sans" textLength="169" lengthAdjust="spacingAndGlyphs">123 ANYWHERE ST., CITY, STATE, 12345</text>
<text x="738.9" y="734" font-size="5.6" font-weight="bold" fill="#fff0c8" font-family="Liberation Sans" textLength="67" lengthAdjust="spacingAndGlyphs">WWW.YOURWEBSITE.COM</text>
<!-- rotation handle -->
<path d="M792.7 735V770" stroke="#fff" stroke-width="1.6"/>
<path d="M792.7 735V770" stroke="#1a7a1a" stroke-width="1.6" stroke-dasharray="3 3"/>
<circle cx="792.7" cy="735" r="3.6" fill="#0b7a1b"/>
</g>
<!-- scissors -->
<g stroke="#f00" stroke-width="1.15" fill="none">
<circle cx="689.2" cy="187.8" r="3"/>
<circle cx="689.2" cy="197.2" r="3"/>
<path d="M691.5 189.5L702.5 197.5M691.5 195.5L702.5 187.5"/>
</g>
</svg>

<div class="a" id="vdiv"></div>
<svg class="a" style="left:431px;top:447px" width="16" height="81" viewBox="431 447 16 81">
<defs><linearGradient id="hg" x1="0" y1="0" x2="1" y2="0"><stop offset="0" stop-color="#03063a"/><stop offset=".5" stop-color="#0d3f86"/><stop offset="1" stop-color="#2a8aae"/></linearGradient></defs>
<path d="M431.8 448H435A10 10 0 0 1 445 458V516A10 10 0 0 1 435 526H431.8Z" fill="url(#hg)"/>
<path d="M440 480.4L434 486.2L440 492" stroke="#fff" stroke-width="1.5" fill="none"/>
</svg>

<!-- canvas toolbar -->
<div class="a" style="left:432px;top:64px;width:488px;height:44px;background:#fff"></div>
<div class="a" style="left:448px;top:78px;font-size:13.5px;color:#2191b8;white-space:nowrap">Fondo</div>
<div class="a" style="left:503px;top:74px;width:25px;height:25px;background:#f5b51d;border:1px solid #c99a20;border-radius:5px"></div>
<div class="a" style="left:536px;top:71px;width:103px;height:30px;background:#f7f7f7;border:1px solid #efefef;border-radius:6px"></div>
<div class="a" style="left:647px;top:71px;width:87px;height:30px;background:#f7f7f7;border:1px solid #efefef;border-radius:6px"></div>
<div class="a" style="left:571px;top:78px;font-size:13.4px;color:#222;white-space:nowrap">Imágenes</div>
<div class="a" style="left:675px;top:78px;font-size:13.8px;color:#222;white-space:nowrap">Modelo</div>
<svg class="a" style="left:544px;top:74px" width="26" height="24" viewBox="544 74 26 24"><g stroke="#1e1e1e" stroke-width="1.5" fill="none"><path d="M549.2 82V92.2H562.4"/><rect x="552.2" y="80" width="13.3" height="9.3"/></g><path d="M553 89.3L557.5 83.5L560.5 86.5L562 85L565 89.3Z" fill="#1e1e1e"/><circle cx="555.5" cy="82.8" r="1" fill="#1e1e1e"/></svg>
<svg class="a" style="left:650px;top:74px" width="26" height="24" viewBox="650 74 26 24"><g stroke="#1e1e1e" stroke-width="1.5" fill="none"><rect x="657" y="80.3" width="3.6" height="6.5" rx="1"/><rect x="657" y="89.5" width="3.6" height="2.3" rx=".8"/><rect x="664.8" y="80.3" width="4.2" height="2.6" rx=".8"/><rect x="664.8" y="85.3" width="4.2" height="6.5" rx="1"/></g></svg>
<div class="a" style="left:437px;top:115px;font-size:12.5px;color:#333;white-space:nowrap">cm</div>


<!-- sidebar labels -->
<div class="a" style="left:25px;top:108px;font-size:13.1px;font-weight:bold;color:#2596bd;white-space:nowrap">Texto</div>



<div class="a sep" style="top:138px"></div>
<div class="a" style="left:13px;top:180px;font-size:12.8px;font-weight:bold;color:#fff;white-space:nowrap">Imágenes</div>
<div class="a sep" style="top:210px"></div>
<div class="a" style="left:8px;top:252px;font-size:12.9px;font-weight:bold;color:#fff;white-space:nowrap">Clipart / ...</div>
<div class="a sep" style="top:282px"></div>
<div class="a" style="left:14px;top:325px;font-size:12.6px;font-weight:bold;color:#fff;white-space:nowrap">Plantillas</div>
<div class="a sep" style="top:354px"></div>
<div class="a" style="left:8px;top:397px;font-size:12.6px;font-weight:bold;color:#fff;white-space:nowrap">Diseño d...</div>
<svg class="a" style="left:3px;top:420px" width="76" height="84" viewBox="0 0 76 84"><path d="M20 3C34 0 50 1 62 5C72 10 74 22 73 40C72 58 73 70 64 78C52 83 32 83 16 81C5 77 1 66 2 50C2 34 1 20 6 12C9 7 14 4 20 3Z" fill="#0a1000"/></svg>
<div class="a sep" style="top:426px;background:#4a4a1a"></div>
<div class="a sep" style="top:498px;background:#4a4a1a"></div>
<div class="a" style="left:11px;top:469px;font-size:12.2px;font-weight:bold;color:#f2ea00;white-space:nowrap">Código QR</div>
<svg class="a" style="left:3px;top:64px" width="79" height="440" viewBox="3 64 79 440">
<path d="M34.6 86V83.6H49.6V86M42 83.6V99.8M39.1 99.8H44.9" stroke="#27a0c8" stroke-width="1.4" fill="none"/>
<g fill="none" stroke="#fff" stroke-width="1.5">
<rect x="33.6" y="154.6" width="14.6" height="14.8"/>
<path d="M34.4 165.9L38.1 161.8L42.2 166.2L47.3 162.8"/>
<circle cx="43.9" cy="159.3" r="1.8"/>
<path d="M50.5 158.9V172.3H35.6"/>
<circle cx="41.9" cy="235.3" r="8.2"/>
<path d="M41.9 227.1A8 8 0 0 0 49.8 235.3M36.3 235.3A6 6 0 0 0 42.5 240.4"/>
<path d="M34.6 312.6V298.4H46.4"/>
<path d="M37 301.3H49.6V312.9L46 316.3H37Z"/>
<path d="M46 316.3V313H49.6" stroke-width="1"/>
<rect x="39.7" y="303.5" width="7.8" height="5.2" stroke-width="1.4"/>
<path d="M39.7 310.7H44M39.7 313.3H43.5" stroke-width="1.2"/>
<path d="M51.6 381A9.8 9.8 0 1 0 44 388.3V381Z" stroke-width="1.7" stroke-linejoin="round"/>
</g>
<g fill="#fff"><circle cx="38.4" cy="375.6" r="1.3"/><circle cx="42.2" cy="374.4" r="1.3"/><circle cx="45.8" cy="375.7" r="1.3"/><circle cx="37.1" cy="379.4" r="1.3"/></g>
<g fill="none" stroke="#ece600" stroke-width="1.9">
<rect x="34.1" y="443.1" width="6.6" height="6.9"/>
<rect x="43.7" y="443.1" width="6.9" height="6.9"/>
<rect x="34.1" y="452.9" width="6.6" height="6.5"/>
<path d="M43.7 460.1V452.9H46.2V456.8H50.6V452.9M45.5 460H47.2M49.5 460H51" />
</g>
<g fill="#ece600"><rect x="36.3" y="445.3" width="2.4" height="2.6"/><rect x="46" y="445.3" width="2.4" height="2.6"/><rect x="36.3" y="455" width="2.4" height="2.6"/></g>
</svg>

<!-- panel cards -->
<div class="a card" style="left:98px;top:81px;width:111px"><div class="ch" style="font-size:10.8px">Agregar Encabezado</div></div>
<div class="a card" style="left:218px;top:81px;width:92px"><div class="ch">Añade un</div></div>
<div class="a card" style="left:319px;top:81px;width:93px"><div class="ch">Añade un cuerpo</div></div>
<div class="a" style="left:100px;top:114px;font-size:19.6px;color:#111;white-space:nowrap">Encabezado</div>
<div class="a" style="left:237px;top:118px;font-size:13.4px;color:#222;white-space:nowrap">Subtítulo</div>
<div class="a" style="left:328px;top:120px;font-size:9.7px;font-weight:bold;color:#111;white-space:nowrap">Cuerpo de texto</div>

<!-- tabs -->
<div class="a" style="left:134px;top:169px;font-size:14.4px;color:#2a93ba;white-space:nowrap">Texto rápido</div>
<div class="a" style="left:300px;top:169px;font-size:13.7px;color:#333;white-space:nowrap">Sugerencias</div>
<div class="a" style="left:249px;top:192px;width:163px;height:1px;background:#e2e2e2"></div>
<div class="a" style="left:98px;top:191px;width:151px;height:2px;background:#2b8fb0"></div>
<svg class="a" style="left:168px;top:192px" width="11" height="6"><path d="M0 0H10L5 5Z" fill="#2b8fb0"/></svg>

<!-- quick text items -->
<div class="a item" style="top:218px">SEPTEMBER</div>
<div class="a item" style="top:258px">GAME</div>
<div class="a item" style="top:298px">DAY</div>
<div class="a item" style="top:338px">Ironclad United vs Thunderstrike FC</div>
<div class="a item" style="top:378px;height:47px;line-height:18px;padding-top:6px">BEERS FROM $5 | ALL YOU CAN EAT FROM $10 |<br>FREE PARKING LOT</div>
<div class="a item" style="top:434px">WWW.YOURWEBSITE.COM</div>
<div class="a item" style="top:474px">123 ANYWHERE ST., CITY, STATE, 12345</div>
<div class="a item" style="top:514px">SAT 15</div>


</body></html>
